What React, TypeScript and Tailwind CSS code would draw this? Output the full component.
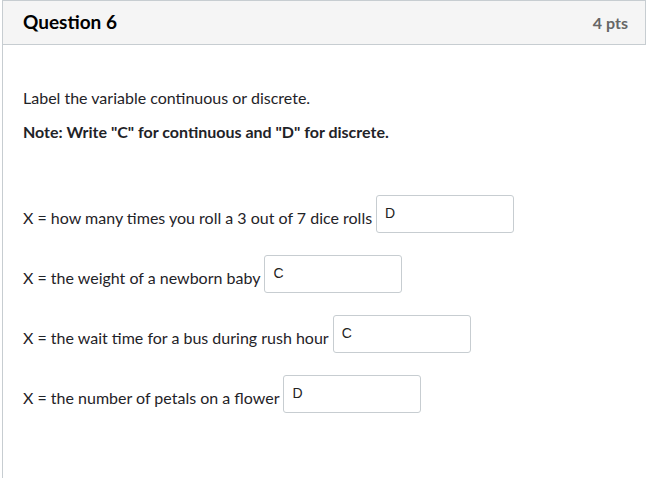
import type { ReactNode } from 'react'

// ─── Answer box ───────────────────────────────────────────────────────────────

function AnswerBox({ value }: { value: string }) {
  return (
    <span className="ml-[4px] h-[38px] w-[138px] shrink-0 rounded-[3px] border border-[#c7cdd1] bg-white pl-[8px] pt-[9px] font-['Liberation_Sans',Arial,sans-serif] text-[14px] leading-4 text-[#222]">
      {value}
    </span>
  )
}

function Row({ children, value }: { children: ReactNode; value: string }) {
  return (
    <div className="flex h-[38px] items-start">
      <span className="pt-[13px] leading-5">{children}</span>
      <AnswerBox value={value} />
    </div>
  )
}

// ─── App ──────────────────────────────────────────────────────────────────────

const rows = [
  { label: 'X = how many times you roll a 3 out of 7 dice rolls', value: 'D' },
  { label: 'X = the weight of a newborn baby', value: 'C' },
  { label: 'X = the wait time for a bus during rush hour', value: 'C' },
  { label: 'X = the number of petals on a flower', value: 'D' },
]

export default function App() {
  return (
    <div className="min-h-screen bg-white font-['Lato',sans-serif] text-[16px] text-[#1f2328]">
      <div className="ml-[2px] min-h-[478px] border-l border-[#c7cdd1]">

        {/* header */}
        <header className="flex h-[45px] items-center justify-between border-y border-r border-[#c7cdd1] bg-[#f5f5f5] pl-[20px] pr-[17px]">
          <h2 className="text-[19px] font-bold text-black">Question 6</h2>
          <span className="font-bold text-[#666]">4 pts</span>
        </header>

        {/* body */}
        <div className="pl-[20px] pt-[41px]">
          <p className="leading-6">Label the variable continuous or discrete.</p>
          <p className="mt-[10px] font-bold leading-6">
            Note: Write "C" for continuous and "D" for discrete.
          </p>

          <div className="mt-[51px] flex flex-col gap-[22px]">
            {rows.map(r => (
              <Row key={r.label} value={r.value}>{r.label}</Row>
            ))}
          </div>
        </div>
      </div>
    </div>
  )
}
